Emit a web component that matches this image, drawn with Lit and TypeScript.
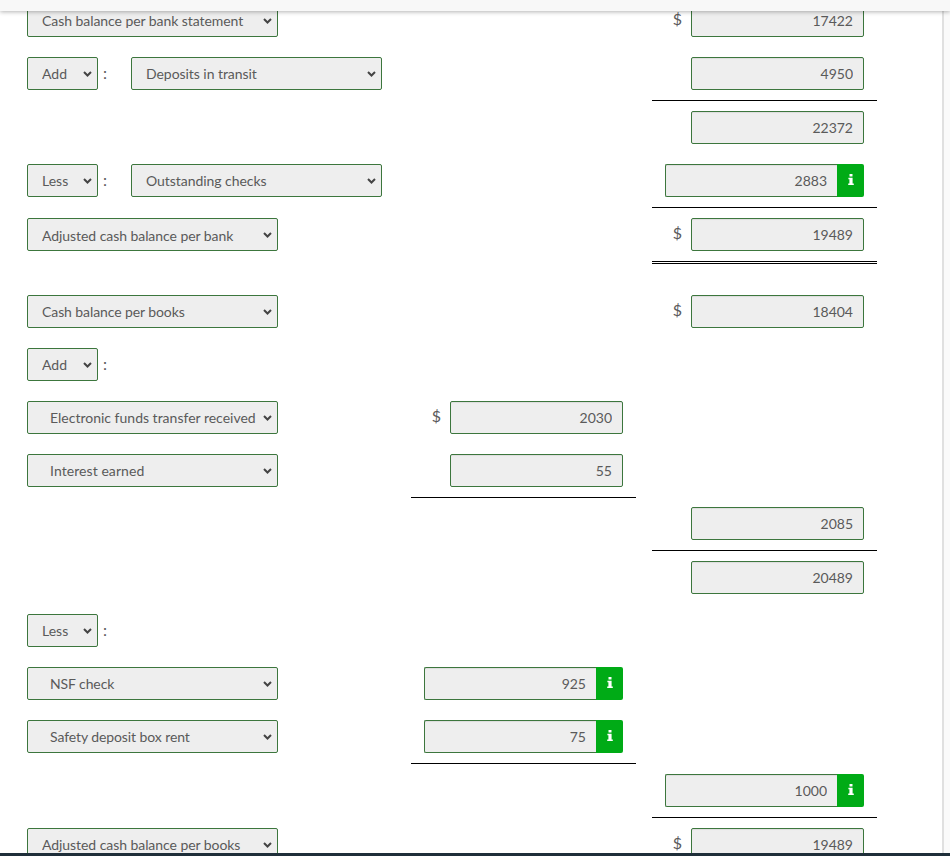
import { LitElement, html, css, nothing } from "lit";
import { customElement } from "lit/decorators.js";

type Amt = { v: string; dollar?: boolean; info?: boolean; rule?: "s" | "d" };
type Row = {
  sel?: string; indent?: boolean; op?: string; sub?: string; ls?: number; low?: boolean; tight?: boolean;
  mid?: Amt; right?: Amt;
};

const rows: Row[] = [
  { sel: "Cash balance per bank statement", ls: -0.06, right: { v: "17422", dollar: true } },
  { op: "Add", sub: "Deposits in transit", ls: -0.05, right: { v: "4950", rule: "s" } },
  { right: { v: "22372" } },
  { op: "Less", sub: "Outstanding checks", ls: -0.05, right: { v: "2883", info: true, rule: "s" } },
  { sel: "Adjusted cash balance per bank", ls: -0.06, low: true, right: { v: "19489", dollar: true, rule: "d" } },
  { sel: "Cash balance per books", ls: -0.09, right: { v: "18404", dollar: true } },
  { op: "Add" },
  { sel: "Electronic funds transfer received", indent: true, mid: { v: "2030", dollar: true } },
  { sel: "Interest earned", ls: 0.07, indent: true, tight: true, mid: { v: "55", rule: "s" } },
  { right: { v: "2085", rule: "s" } },
  { right: { v: "20489" } },
  { op: "Less" },
  { sel: "NSF check", ls: -0.1, indent: true, mid: { v: "925", info: true } },
  { sel: "Safety deposit box rent", ls: -0.09, indent: true, mid: { v: "75", info: true, rule: "s" } },
  { right: { v: "1000", info: true, rule: "s" } },
  { sel: "Adjusted cash balance per books", ls: -0.06, right: { v: "19489", dollar: true } },
];

@customElement("app-root")
export class AppRoot extends LitElement {
  static styles = css`
    :host {
      display: block;
      position: relative;
      height: 856px;
      overflow: hidden;
      background: #fafafa;
      font-family: "Lato", "Liberation Sans", sans-serif;
      font-size: 14px;
      color: #5a5a5a;
    }
    .top {
      position: absolute;
      left: 0; right: 0; top: 0;
      height: 11px;
      background: #f8f8f8;
      box-shadow: 0 1px 4px rgba(0,0,0,.3);
      z-index: 2;
    }
    .bottom {
      position: absolute;
      left: 0; right: 0; bottom: 0;
      height: 3px;
      background: #1f2f3a;
      z-index: 2;
    }
    .page {
      width: 944px;
      height: 856px;
      box-sizing: border-box;
      background: #fff;
      border-right: 2px solid #e0e0e0;
      padding-top: 4px;
      overflow: hidden;
    }
    .row {
      display: grid;
      grid-template-columns: 368px 225px 225px;
      column-gap: 16px;
      padding-left: 27px;
      align-items: start;
      margin-bottom: 20px;
      min-height: 33px;
    }
    .row.ruled { margin-bottom: 10px; }
    .row.tight { margin-bottom: 9px; }
    .row.dbl { margin-bottom: 31px; }
    .left { display: flex; align-items: center; }
    select {
      appearance: none;
      -webkit-appearance: none;
      box-sizing: border-box;
      height: 33px;
      width: 251px;
      margin: 0;
      padding: 0 0 0 14px;
      font: inherit;
      color: #5a5a5a;
      background-color: #eee;
      background-image: url("data:image/svg+xml,%3Csvg xmlns='http://www.w3.org/2000/svg' width='9' height='6' viewBox='0 0 9 6'%3E%3Cpath d='M1 1l3.5 3.5L8 1' fill='none' stroke='%23444' stroke-width='2'/%3E%3C/svg%3E");
      background-repeat: no-repeat;
      background-position: right 5px center;
      border: 1px solid #3c763d;
      border-radius: 2px;
    }
    select.indent { padding-left: 22px; }
    select.low { padding-top: 2px; }
    select.op { width: 71px; }
    .colon { width: 33px; padding-left: 5px; box-sizing: border-box; font-size: 16px; line-height: 20px; margin-bottom: 2px; }
    .cell {
      display: flex;
      justify-content: flex-end;
      align-items: center;
      padding-right: 13px;
      gap: 9px;
    }
    .cell.s { padding-bottom: 10px; border-bottom: 1px solid #000; }
    .cell.d { padding-bottom: 10px; border-bottom: 3px double #000; }
    .dollar { font-size: 16px; line-height: 20px; margin-bottom: 4px; }
    .box { display: flex; width: 173px; height: 33px; box-sizing: border-box; }
    .box.wide { width: 199px; }
    input {
      box-sizing: border-box;
      flex: 1;
      min-width: 0;
      height: 33px;
      margin: 0;
      padding: 0 10px 0 0;
      text-align: right;
      font: inherit;
      color: #5a5a5a;
      background: #eee;
      border: 1px solid #3c763d;
      border-radius: 2px;
      box-shadow: inset 0 1px 1px rgba(0,0,0,.075);
      outline: none;
    }
    .box.wide input { border-right: 0; border-radius: 2px 0 0 2px; }
    .info {
      width: 27px;
      height: 33px;
      box-sizing: border-box;
      background: #00ab16;
      border-radius: 0 2px 2px 0;
      display: flex;
      align-items: center;
      justify-content: center;
      padding-bottom: 2px;
    }
    .info svg { width: 6px; height: 11px; fill: #fff; display: block; }
  `;

  private amt(a?: Amt) {
    if (!a) return html`<div></div>`;
    return html`<div class="cell ${a.rule ?? ""}">
      ${a.dollar ? html`<span class="dollar">$</span>` : nothing}
      <div class="box ${a.info ? "wide" : ""}">
        <input readonly .value=${a.v} />
        ${a.info
          ? html`<span class="info"><svg viewBox="0 0 6 11"><path d="M1.5 0h3v2.6h-3zM.4 3.8h4.2V9.5H5.8V11H.2V9.5h1.2V5.3H.4z"/></svg></span>`
          : nothing}
      </div>
    </div>`;
  }

  private left(r: Row) {
    const st = r.ls ? `letter-spacing:${r.ls}px` : "";
    if (r.sel) {
      return html`<div class="left"><select style=${st} class="${r.indent ? "indent" : ""} ${r.low ? "low" : ""}"><option>${r.sel}</option></select></div>`;
    }
    if (r.op) {
      return html`<div class="left">
        <select class="op"><option>${r.op}</option></select>
        <span class="colon">:</span>
        ${r.sub ? html`<select style=${st}><option>${r.sub}</option></select>` : nothing}
      </div>`;
    }
    return html`<div></div>`;
  }

  render() {
    return html`
      <div class="top"></div>
      <div class="page">
        ${rows.map((r) => {
          const rule = r.mid?.rule ?? r.right?.rule;
          const cls = r.tight ? "tight" : rule === "s" ? "ruled" : rule === "d" ? "dbl" : "";
          return html`<div class="row ${cls}">
            ${this.left(r)}${this.amt(r.mid)}${this.amt(r.right)}
          </div>`;
        })}
      </div>
      <div class="bottom"></div>
    `;
  }
}
